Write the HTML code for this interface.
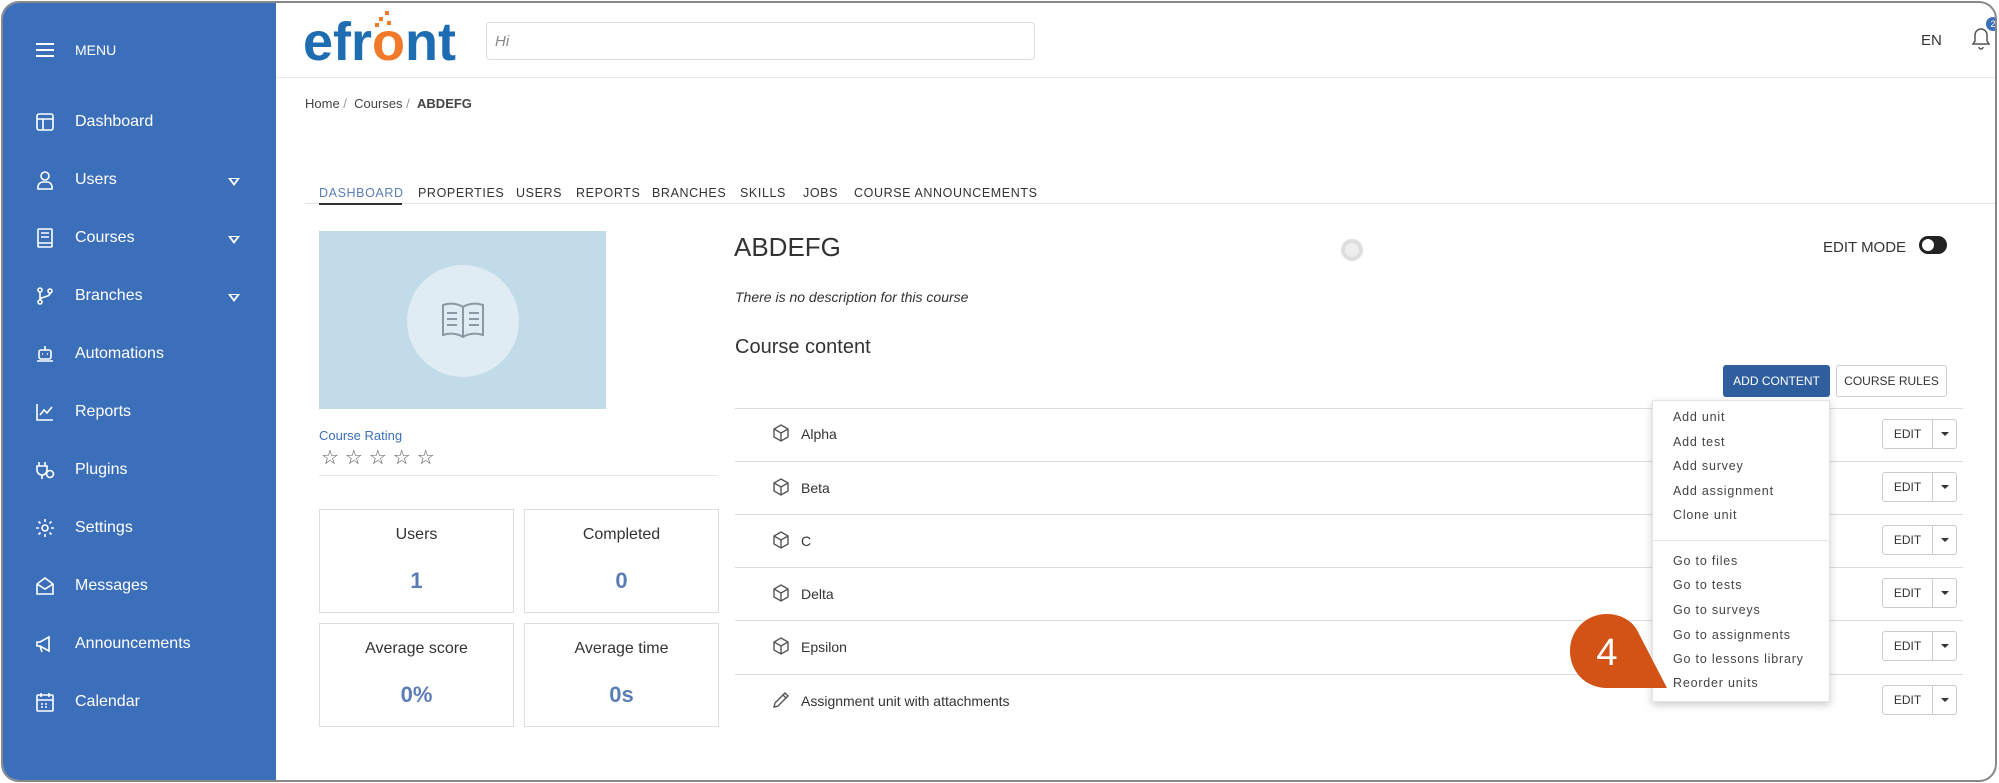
<!DOCTYPE html>
<html><head><meta charset="utf-8"><style>
*{box-sizing:border-box;margin:0;padding:0}
body{width:1999px;height:783px;background:#fff;font-family:"Liberation Sans",sans-serif;position:relative;overflow:hidden;color:#333}
.frame{position:absolute;left:1px;top:1px;width:1996px;height:781px;border:2px solid #888;border-radius:18px;overflow:hidden;background:#fff}
.side{position:absolute;left:0;top:0;width:273px;height:100%;background:#3c6fb9;color:#fff}
.si{position:absolute;left:72px;font-size:16px}
.ic{position:absolute;left:32px;width:20px;height:20px}
.car{position:absolute;left:225px;width:0;height:0;border-left:6px solid transparent;border-right:6px solid transparent;border-top:8px solid #fff}
.car:after{content:"";position:absolute;left:-3px;top:-7px;border-left:3px solid transparent;border-right:3px solid transparent;border-top:4px solid #3c6fb9}
.abs{position:absolute}
.tab{position:absolute;top:183px;font-size:12.5px;letter-spacing:.6px;color:#333}
.box{position:absolute;border:1px solid #ddd;text-align:center}
.box .l{margin-top:16px;font-size:16px;color:#333}
.box .n{margin-top:24px;font-size:22px;color:#5b7db5;font-weight:bold}
.row{position:absolute;left:732px;width:1228px;border-top:1px solid #ddd}
.rt{position:absolute;left:798px;font-size:14px;color:#333}
.edit{position:absolute;left:1879px;width:75px;height:30px;border:1px solid #ccc;border-radius:3px;font-size:12px}
.edit span{position:absolute;left:0;top:0;width:50px;height:28px;line-height:28px;text-align:center;border-right:1px solid #ccc}
.edit i{position:absolute;left:58px;top:12px;border-left:4px solid transparent;border-right:4px solid transparent;border-top:4px solid #333}
.dd{position:absolute;left:1649px;top:397px;width:178px;height:302px;background:#fff;border:1px solid #e4e4e4;box-shadow:0 3px 8px rgba(0,0,0,.2);font-size:12.5px;letter-spacing:.8px;color:#444}
.dd div{position:absolute;left:20px}
.cube{position:absolute;left:768px;width:20px;height:20px}
</style></head><body><div class="frame">
<div class="side">
<div class="abs" style="left:33px;top:40px;width:18px;height:2px;background:#fff;box-shadow:0 6px 0 #fff,0 12px 0 #fff"></div>
<div class="si" style="top:39px;font-size:14px">MENU</div>
<svg class="ic" style="top:109px" viewBox="0 0 20 20" fill="none" stroke="#fff" stroke-width="1.6"><rect x="2" y="2" width="16" height="16" rx="2"/><path d="M2 7h16M8 7v11"/></svg><div class="si" style="top:110px">Dashboard</div>
<svg class="ic" style="top:167px" viewBox="0 0 20 20" fill="none" stroke="#fff" stroke-width="1.6"><circle cx="10" cy="6" r="4"/><path d="M3 19v-2a5 5 0 0 1 5-5h4a5 5 0 0 1 5 5v2z"/></svg><div class="si" style="top:168px">Users</div><div class="car" style="top:175px"></div>
<svg class="ic" style="top:225px" viewBox="0 0 20 20" fill="none" stroke="#fff" stroke-width="1.6"><rect x="3" y="1" width="14" height="18" rx="1"/><path d="M6 5h8M6 9h8M3 15h14"/></svg><div class="si" style="top:226px">Courses</div><div class="car" style="top:233px"></div>
<svg class="ic" style="top:283px" viewBox="0 0 20 20" fill="none" stroke="#fff" stroke-width="1.6"><circle cx="5" cy="4" r="2"/><circle cx="5" cy="16" r="2"/><circle cx="15" cy="5" r="2"/><path d="M5 6v8M15 7c0 5-10 3-10 7"/></svg><div class="si" style="top:284px">Branches</div><div class="car" style="top:291px"></div>
<svg class="ic" style="top:341px" viewBox="0 0 20 20" fill="none" stroke="#fff" stroke-width="1.6"><rect x="4" y="6" width="12" height="9" rx="2"/><path d="M10 2v4M2 17h16M7 10h1M12 10h1"/></svg><div class="si" style="top:342px">Automations</div>
<svg class="ic" style="top:399px" viewBox="0 0 20 20" fill="none" stroke="#fff" stroke-width="1.6"><path d="M2 2v16h16M5 13l4-5 3 3 5-6"/></svg><div class="si" style="top:400px">Reports</div>
<svg class="ic" style="top:457px" viewBox="0 0 20 20" fill="none" stroke="#fff" stroke-width="1.6"><path d="M4 2v4M10 2v4M2 6h10v4a5 5 0 0 1-10 0zM7 15v4"/><circle cx="15" cy="14" r="3.5"/></svg><div class="si" style="top:458px">Plugins</div>
<svg class="ic" style="top:515px" viewBox="0 0 20 20" fill="none" stroke="#fff" stroke-width="1.6"><circle cx="10" cy="10" r="3"/><path d="M10 1v3M10 16v3M1 10h3M16 10h3M3.5 3.5l2 2M14.5 14.5l2 2M3.5 16.5l2-2M14.5 5.5l2-2"/></svg><div class="si" style="top:516px">Settings</div>
<svg class="ic" style="top:573px" viewBox="0 0 20 20" fill="none" stroke="#fff" stroke-width="1.6"><path d="M2 8l8-6 8 6v10H2z M2 8l8 5 8-5"/></svg><div class="si" style="top:574px">Messages</div>
<svg class="ic" style="top:631px" viewBox="0 0 20 20" fill="none" stroke="#fff" stroke-width="1.6"><path d="M2 8v4h3l9 5V3L5 8zM5 12l2 6"/></svg><div class="si" style="top:632px">Announcements</div>
<svg class="ic" style="top:689px" viewBox="0 0 20 20" fill="none" stroke="#fff" stroke-width="1.6"><rect x="2" y="3" width="16" height="16" rx="1"/><path d="M2 8h16M6 1v4M14 1v4M6 12h2M10 12h2M6 15h2M10 15h2"/></svg><div class="si" style="top:690px">Calendar</div>
</div>
<div class="abs" style="left:273px;top:74px;width:1725px;height:1px;background:#e6e6e6"></div>
<div class="abs" style="left:300px;top:8px;font-size:54px;font-weight:bold;color:#1e6db3;letter-spacing:0px">efr<span style="color:#f07a2a">o</span>nt</div>
<div class="abs" style="left:376px;top:14px;width:4px;height:4px;background:#f07a2a;box-shadow:6px -6px 0 #f07a2a,-4px 6px 0 #f07a2a,8px 4px 0 #f07a2a"></div>
<div class="abs" style="left:483px;top:19px;width:549px;height:38px;border:1px solid #ddd;border-radius:4px;font-style:italic;color:#888;font-size:15px;padding:10px 8px">Hi</div>
<div class="abs" style="left:1918px;top:29px;font-size:15px">EN</div>
<svg class="abs" style="left:1966px;top:22px" width="24" height="26" viewBox="0 0 24 26" fill="none" stroke="#555" stroke-width="1.5"><path d="M4 19h16l-2-3v-6a6 6 0 0 0-12 0v6zM10 22a2 2 0 0 0 4 0"/></svg>
<div class="abs" style="left:1983px;top:14px;width:14px;height:14px;border-radius:7px;background:#3c6fb9;color:#fff;font-size:9px;text-align:center;line-height:14px">2</div>
<div class="abs" style="left:302px;top:93px;font-size:13px;color:#444">Home <span style="color:#999">/</span>&nbsp; Courses <span style="color:#999">/</span>&nbsp; <b>ABDEFG</b></div>
<div class="abs" style="left:302px;top:200px;width:1690px;height:1px;background:#e6e6e6"></div>
<div class="tab" style="left:316px;color:#5b7db5">DASHBOARD</div><div class="abs" style="left:316px;top:200px;width:83px;height:2px;background:#333"></div>
<div class="tab" style="left:415px">PROPERTIES</div><div class="tab" style="left:513px">USERS</div><div class="tab" style="left:573px">REPORTS</div><div class="tab" style="left:649px">BRANCHES</div><div class="tab" style="left:737px">SKILLS</div><div class="tab" style="left:800px">JOBS</div><div class="tab" style="left:851px">COURSE ANNOUNCEMENTS</div>
<div class="abs" style="left:316px;top:228px;width:287px;height:178px;background:#c2dbe8"></div>
<div class="abs" style="left:404px;top:262px;width:112px;height:112px;border-radius:56px;background:#dfecf3"></div>
<svg class="abs" style="left:432px;top:290px" width="56" height="56" viewBox="0 0 56 56" fill="none" stroke="#8a9aa4" stroke-width="2"><path d="M28 14c-6-4-14-4-20-2v30c6-2 14-2 20 2 6-4 14-4 20-2V12c-6-2-14-2-20 2zM28 14v30M12 20h10M12 26h10M12 32h10M34 20h10M34 26h10M34 32h10"/></svg>
<div class="abs" style="left:316px;top:425px;font-size:13px;color:#3c6fb9">Course Rating</div>
<div class="abs" style="left:318px;top:442px;font-size:20px;color:#555;letter-spacing:6px">☆☆☆☆☆</div>
<div class="abs" style="left:316px;top:472px;width:399px;height:1px;background:#e6e6e6"></div>
<div class="box" style="left:316px;top:506px;width:195px;height:104px"><div class="l">Users</div><div class="n">1</div></div>
<div class="box" style="left:521px;top:506px;width:195px;height:104px"><div class="l">Completed</div><div class="n">0</div></div>
<div class="box" style="left:316px;top:620px;width:195px;height:104px"><div class="l">Average score</div><div class="n">0%</div></div>
<div class="box" style="left:521px;top:620px;width:195px;height:104px"><div class="l">Average time</div><div class="n">0s</div></div>
<div class="abs" style="left:731px;top:229px;font-size:26px;color:#333">ABDEFG</div>
<div class="abs" style="left:1338px;top:236px;width:22px;height:22px;border-radius:11px;background:#eee;border:4px solid #ddd"></div>
<div class="abs" style="left:1820px;top:236px;font-size:15px">EDIT MODE</div>
<div class="abs" style="left:1916px;top:233px;width:28px;height:18px;border-radius:9px;background:#222"><div style="position:absolute;left:3px;top:3px;width:12px;height:12px;border-radius:6px;background:#fff"></div></div>
<div class="abs" style="left:732px;top:286px;font-size:14px;font-style:italic;color:#333">There is no description for this course</div>
<div class="abs" style="left:732px;top:333px;font-size:20px;color:#333">Course content</div>
<div class="abs" style="left:1720px;top:362px;width:107px;height:32px;background:#2f5e9e;border-radius:3px;color:#fff;font-size:12px;text-align:center;line-height:32px">ADD CONTENT</div>
<div class="abs" style="left:1833px;top:362px;width:111px;height:32px;border:1px solid #ccc;border-radius:3px;font-size:12px;text-align:center;line-height:30px">COURSE RULES</div>
<div class="row" style="top:405px"></div><div class="row" style="top:458px"></div><div class="row" style="top:511px"></div><div class="row" style="top:564px"></div><div class="row" style="top:617px"></div><div class="row" style="top:671px"></div>
<svg class="cube" style="top:420px" viewBox="0 0 20 20" fill="none" stroke="#555" stroke-width="1.4"><path d="M10 2l7 4v8l-7 4-7-4V6zM3 6l7 4 7-4M10 10v8"/></svg><div class="rt" style="top:423px">Alpha</div>
<svg class="cube" style="top:474px" viewBox="0 0 20 20" fill="none" stroke="#555" stroke-width="1.4"><path d="M10 2l7 4v8l-7 4-7-4V6zM3 6l7 4 7-4M10 10v8"/></svg><div class="rt" style="top:477px">Beta</div>
<svg class="cube" style="top:527px" viewBox="0 0 20 20" fill="none" stroke="#555" stroke-width="1.4"><path d="M10 2l7 4v8l-7 4-7-4V6zM3 6l7 4 7-4M10 10v8"/></svg><div class="rt" style="top:530px">C</div>
<svg class="cube" style="top:580px" viewBox="0 0 20 20" fill="none" stroke="#555" stroke-width="1.4"><path d="M10 2l7 4v8l-7 4-7-4V6zM3 6l7 4 7-4M10 10v8"/></svg><div class="rt" style="top:583px">Delta</div>
<svg class="cube" style="top:633px" viewBox="0 0 20 20" fill="none" stroke="#555" stroke-width="1.4"><path d="M10 2l7 4v8l-7 4-7-4V6zM3 6l7 4 7-4M10 10v8"/></svg><div class="rt" style="top:636px">Epsilon</div>
<svg class="cube" style="top:687px" viewBox="0 0 20 20" fill="none" stroke="#555" stroke-width="1.4"><path d="M3 17l1-4 10-10 3 3-10 10zM12 5l3 3"/></svg><div class="rt" style="top:690px">Assignment unit with attachments</div>
<div class="edit" style="top:416px"><span>EDIT</span><i></i></div>
<div class="edit" style="top:469px"><span>EDIT</span><i></i></div>
<div class="edit" style="top:522px"><span>EDIT</span><i></i></div>
<div class="edit" style="top:575px"><span>EDIT</span><i></i></div>
<div class="edit" style="top:628px"><span>EDIT</span><i></i></div>
<div class="edit" style="top:682px"><span>EDIT</span><i></i></div>
<div class="dd">
<div style="top:9px">Add unit</div><div style="top:34px">Add test</div><div style="top:58px">Add survey</div><div style="top:83px">Add assignment</div><div style="top:107px">Clone unit</div>
<div style="left:0;top:139px;width:176px;height:1px;background:#e6e6e6"></div>
<div style="top:153px">Go to files</div><div style="top:177px">Go to tests</div><div style="top:202px">Go to surveys</div><div style="top:227px">Go to assignments</div><div style="top:251px">Go to lessons library</div><div style="top:275px">Reorder units</div>
</div>
<svg class="abs" style="left:1566px;top:610px" width="100" height="80" viewBox="0 0 100 80"><path d="M38 1C17 1 1 17 1 38s16 37 37 37h60L68 17C62 7 51 1 38 1z" fill="#d35215"/><text x="38" y="52" font-family="Liberation Sans" font-size="38" fill="#fff" text-anchor="middle">4</text></svg>
</div></body></html>
